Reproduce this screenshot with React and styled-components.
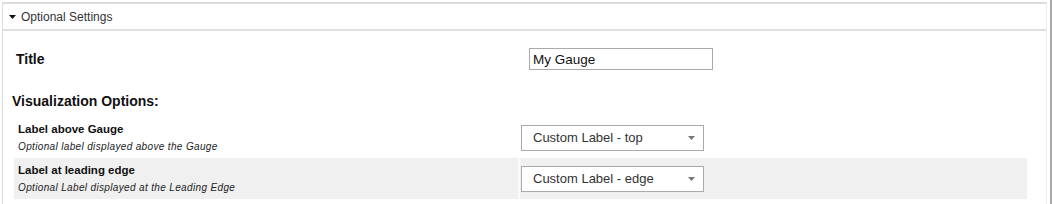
import React from 'react';
import styled, { createGlobalStyle } from 'styled-components';

const GlobalStyle = createGlobalStyle`
    html, body {
        margin: 0;
        padding: 0;
        background: #fff;
        font-family: "Liberation Sans", Arial, sans-serif;
        color: #222;
    }
`;

const rows = [
    {
        label: 'Label above Gauge',
        hint: 'Optional label displayed above the Gauge',
        value: 'Custom Label - top'
    },
    {
        label: 'Label at leading edge',
        hint: 'Optional Label displayed at the Leading Edge',
        value: 'Custom Label - edge'
    }
];

const Caret = () => (
    <svg width="7" height="4" viewBox="0 0 7 4">
        <path d="M0 0 L7 0 L3.5 4 Z" fill="#111" />
    </svg>
);

const SelectArrow = () => (
    <svg width="7" height="4" viewBox="0 0 7 4">
        <path d="M0 0 L7 0 L3.5 4 Z" fill="#777" />
    </svg>
);

export default function App() {
    return (
        <Page>
            <GlobalStyle />
            <Panel>
                <Header>
                    <Caret />
                    <span>Optional Settings</span>
                </Header>
                <Body>
                    <TitleRow>
                        <TitleLabel>Title</TitleLabel>
                        <TitleInput defaultValue="My Gauge" />
                    </TitleRow>
                    <SectionTitle>Visualization Options:</SectionTitle>
                    {rows.map((row, i) => (
                        <OptionRow key={row.label} shaded={i % 2 === 1}>
                            <OptionLabel>
                                <strong>{row.label}</strong>
                                <em>{row.hint}</em>
                            </OptionLabel>
                            <OptionControl shaded={i % 2 === 1}>
                                <Select>
                                    <span>{row.value}</span>
                                    <SelectArrow />
                                </Select>
                            </OptionControl>
                        </OptionRow>
                    ))}
                </Body>
            </Panel>
            <Scrollbar />
        </Page>
    );
}

const Page = styled.div`
    display: flex;
    width: 1052px;
    height: 204px;
    overflow: hidden;
    background: #fff;
`;

const Panel = styled.div`
    flex: 1;
    margin: 2px 3px 0 2px;
    border-top: 2px solid #dcdcdc;
    border-left: 1px solid #dcdcdc;
    border-right: 1px solid #ececec;
`;

const Scrollbar = styled.div`
    width: 2px;
    background: #a9a9a9;
`;

const Header = styled.div`
    display: flex;
    align-items: center;
    gap: 5px;
    height: 25px;
    padding-left: 6px;
    border-bottom: 2px solid #e0e0e0;
    font-size: 12px;
    color: #333;
    svg {
        margin-top: 1px;
    }
`;

const Body = styled.div`
    display: flex;
    flex-direction: column;
    padding: 0 19px 0 9px;
`;

const TitleRow = styled.div`
    display: grid;
    grid-template-columns: 517px 184px;
    align-items: center;
    height: 30px;
    margin-top: 13px;
`;

const TitleLabel = styled.div`
    padding-left: 4px;
    font-size: 14px;
    font-weight: bold;
    color: #111;
`;

const TitleInput = styled.input`
    box-sizing: border-box;
    width: 184px;
    height: 22px;
    margin: 0;
    padding: 0 3px;
    border: 1px solid #aaa;
    font-family: "Liberation Sans", Arial, sans-serif;
    font-size: 13.5px;
    color: #111;
    outline: none;
`;

const SectionTitle = styled.div`
    margin-top: 19px;
    margin-bottom: 8px;
    font-size: 14px;
    font-weight: bold;
    color: #111;
`;

const OptionRow = styled.div`
    display: grid;
    grid-template-columns: 504px 1fr;
    height: 41px;
    margin-left: 2px;
    background: ${p => (p.shaded ? '#f0f0f0' : '#fff')};
`;

const OptionLabel = styled.div`
    display: flex;
    flex-direction: column;
    justify-content: center;
    gap: 6px;
    padding-left: 4px;
    strong {
        font-size: 11.5px;
        font-weight: bold;
        color: #111;
    }
    em {
        font-size: 10px;
        letter-spacing: 0.35px;
        color: #222;
    }
`;

const OptionControl = styled.div`
    display: flex;
    align-items: center;
    padding-left: 1px;
    border-left: 2px solid ${p => (p.shaded ? '#fafafa' : '#fff')};
`;

const Select = styled.div`
    box-sizing: border-box;
    display: flex;
    align-items: center;
    justify-content: space-between;
    width: 183px;
    height: 26px;
    padding: 0 8px 0 11px;
    border: 1px solid #aaa;
    background: #fff;
    font-size: 13px;
    color: #333;
`;
